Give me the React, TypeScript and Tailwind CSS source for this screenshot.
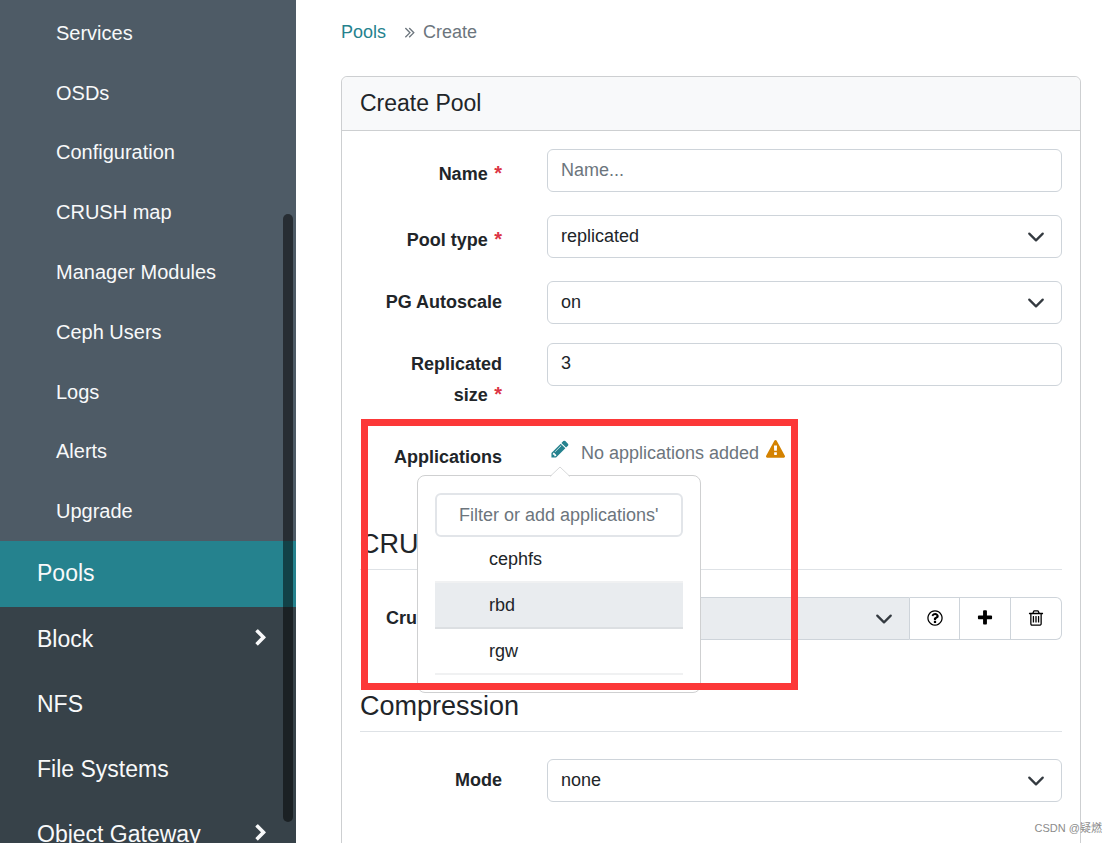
import type { ReactNode } from 'react';

const icons = {
  pencil:
    'M491 1536l91-91-235-235-91 91v107h128v128h107zm523-928q0-22-22-22-10 0-17 7l-542 542q-7 7-7 17 0 22 22 22 10 0 17-7l542-542q7-7 7-17zm-54-192l416 416-832 832h-416v-416zm683 96q0 53-37 90l-166 166-416-416 166-165q36-38 90-38 53 0 91 38l235 234q37 39 37 91z',
  warning:
    'M1024 1375v-190q0-14-9.500-23.500t-22.500-9.500h-192q-13 0-22.500 9.500t-9.500 23.500v190q0 14 9.500 23.500t22.500 9.500h192q13 0 22.500-9.500t9.500-23.500zm-2-374l18-459q0-12-10-19-13-11-24-11h-220q-11 0-24 11-10 7-10 21l17 457q0 10 10 16.500t24 6.500h185q14 0 23.500-6.500t10.500-16.500zm-14-934l768 1408q35 63-2 126-17 29-46.500 46t-63.500 17h-1536q-34 0-63.500-17t-46.500-46q-37-63-2-126l768-1408q17-31 47-49t65-18 65 18 47 49z',
  plus: 'M1600 736v192q0 40-28 68t-68 28h-416v416q0 40-28 68t-68 28h-192q-40 0-68-28t-28-68v-416h-416q-40 0-68-28t-28-68v-192q0-40 28-68t68-28h416v-416q0-40 28-68t68-28h192q40 0 68 28t28 68v416h416q40 0 68 28t28 68z',
  trash:
    'M704 736v576q0 14-9 23t-23 9h-64q-14 0-23-9t-9-23v-576q0-14 9-23t23-9h64q14 0 23 9t9 23zm256 0v576q0 14-9 23t-23 9h-64q-14 0-23-9t-9-23v-576q0-14 9-23t23-9h64q14 0 23 9t9 23zm256 0v576q0 14-9 23t-23 9h-64q-14 0-23-9t-9-23v-576q0-14 9-23t23-9h64q14 0 23 9t9 23zm128 724v-948h-896v948q0 22 7 40.500t14.500 27 10.500 8.500h832q3 0 10.500-8.500t14.500-27 7-40.500zm-672-1076h448l-48-117q-7-9-17-11h-317q-10 2-17 11zm928 32v64q0 14-9 23t-23 9h-96v948q0 83-47 143.500t-113 60.500h-832q-66 0-113-58.500t-47-141.500v-952h-96q-14 0-23-9t-9-23v-64q0-14 9-23t23-9h309l70-167q15-37 54-63t79-26h320q40 0 79 26t54 63l70 167h309q14 0 23 9t9 23z',
  question:
    'M1008 1200v160q0 14-9 23t-23 9h-160q-14 0-23-9t-9-23v-160q0-14 9-23t23-9h160q14 0 23 9t9 23zm256-496q0 50-15 90t-45.500 69-52 44-59.500 36q-32 18-46.500 28t-26 24-11.500 29v32q0 14-9 23t-23 9h-160q-14 0-23-9t-9-23v-68q0-35 10.500-64.500t24-47.500 39-35.500 41-25.500 44.500-21q53-25 75-43t22-49q0-42-43.500-71.500t-95.500-29.500q-56 0-95 27-29 20-80 83-9 12-25 12-11 0-19-6l-108-82q-10-7-12-20t5-23q122-192 349-192 129 0 238.500 89.500t109.500 214.500zm-368-448q-130 0-248.500 51t-204 136.500-136.500 204-51 248.500 51 248.500 136.500 204 204 136.500 248.500 51 248.500-51 204-136.500 136.500-204 51-248.500-51-248.500-136.500-204-204-136.500-248.500-51zm768 640q0 209-103 385.500t-279.500 279.500-385.500 103-385.500-103-279.500-279.500-103-385.500 103-385.500 279.500-279.500 385.500-103 385.500 103 279.500 279.500 103 385.500z',
  chevronRight:
    'M1363 877l-742 742q-19 19-45 19t-45-19l-166-166q-19-19-19-45t19-45l531-531-531-531q-19-19-19-45t19-45l166-166q19-19 45-19t45 19l742 742q19 19 19 45t-19 45z',
  angleDoubleRight:
    'M979 960q0 13-10 23l-466 466q-10 10-23 10t-23-10l-50-50q-10-10-10-23t10-23l393-393-393-393q-10-10-10-23t10-23l50-50q10-10 23-10t23 10l466 466q10 10 10 23zm384 0q0 13-10 23l-466 466q-10 10-23 10t-23-10l-50-50q-10-10-10-23t10-23l393-393-393-393q-10-10-10-23t10-23l50-50q10-10 23-10t23 10l466 466q10 10 10 23z',
};

function Icon({ name, className }: { name: keyof typeof icons; className: string }) {
  return (
    <svg viewBox="0 0 1792 1792" fill="currentColor" aria-hidden="true" className={className}>
      <path d={icons[name]} />
    </svg>
  );
}

const clusterItems = [
  'Services',
  'OSDs',
  'Configuration',
  'CRUSH map',
  'Manager Modules',
  'Ceph Users',
  'Logs',
  'Alerts',
  'Upgrade',
];

const sections = [
  { label: 'Block', expandable: true },
  { label: 'NFS', expandable: false },
  { label: 'File Systems', expandable: false },
  { label: 'Object Gateway', expandable: true },
];

function Sidebar() {
  return (
    <nav className="relative flex w-[296px] shrink-0 flex-col overflow-hidden bg-[#374249] text-[#f8f9fa]">
      <ul className="flex min-h-[541px] shrink-0 flex-col bg-[#4e5b66] pt-[3px] text-xl">
        {clusterItems.map((item) => (
          <li key={item} className="flex flex-1">
            <a href="#" className="flex flex-1 items-center pl-14">
              {item}
            </a>
          </li>
        ))}
      </ul>
      <ul className="shrink-0 text-[23px]">
        <li>
          <a href="#" aria-current="page" className="flex h-[66px] items-center bg-[#25828e] pl-[37px]">
            Pools
          </a>
        </li>
        {sections.map((section) => (
          <li key={section.label}>
            <a href="#" className="flex h-[65px] items-center justify-between pr-[26px] pl-[37px]">
              {section.label}
              {section.expandable && <Icon name="chevronRight" className="mb-1 size-[18px]" />}
            </a>
          </li>
        ))}
      </ul>
      <div className="absolute top-[214px] right-[3px] h-[608px] w-[10px] rounded-full bg-black/50" />
    </nav>
  );
}

type RowProps = {
  id: string;
  label: string;
  required?: boolean;
  lowered?: boolean;
  className?: string;
  children: ReactNode;
};

function Row({ id, label, required, lowered, className = '', children }: RowProps) {
  return (
    <div className={`grid grid-cols-[142fr_515fr] gap-[45px] ${className}`}>
      <label
        htmlFor={id}
        className={`pl-4 text-right leading-[31px] font-bold ${lowered ? 'pt-[10px]' : 'pt-[6px]'}`}
      >
        {label}
        {required && <span className="ml-px text-xl leading-none text-[#dc3545]">{'\u00a0*'}</span>}
      </label>
      {children}
    </div>
  );
}

const field = 'h-[43px] w-full border border-[#ced4da] px-[13px] text-[#212529]';

function Select({ id, value, disabled }: { id: string; value: string; disabled?: boolean }) {
  return (
    <div className="relative min-w-0 flex-1">
      <select
        id={id}
        disabled={disabled}
        className={`${field} appearance-none pb-[2px] ${disabled ? 'rounded-l-md bg-[#e9ecef]' : 'rounded-md bg-white'}`}
      >
        <option>{value}</option>
      </select>
      <svg
        viewBox="0 0 16 16"
        fill="none"
        stroke="#343a40"
        strokeWidth="2"
        strokeLinecap="round"
        strokeLinejoin="round"
        aria-hidden="true"
        className="pointer-events-none absolute top-[13px] right-[17px] size-[18px]"
      >
        <path d="m2 5 6 6 6-6" />
      </svg>
    </div>
  );
}

function ApplicationsPopover() {
  return (
    <div className="absolute top-[39px] -left-[130px] z-10 w-[284px] rounded-lg border border-[#cfd0d1] bg-white p-[17px] text-[#212529]">
      <svg viewBox="0 0 20 11" aria-hidden="true" className="absolute -top-[10px] left-[132px] h-[11px] w-5">
        <path d="M0 11 10 1l10 10z" fill="#fff" />
        <path d="M0 10.500 10 1l10 9.500" fill="none" stroke="#d8d9da" />
      </svg>
      <input
        aria-label="Filter or add applications"
        placeholder="Filter or add applications'"
        className="h-11 w-full rounded-md border-2 border-[#e2e5e9] px-[22px] placeholder:text-[#6c757d]"
      />
      <ul>
        {['cephfs', 'rbd', 'rgw'].map((app) => (
          <li key={app}>
            <button
              type="button"
              className={`h-[46px] w-full border-b-2 pl-[54px] text-left ${
                app === 'rbd' ? 'border-[#dcdfe2] bg-[#e9ecef]' : 'border-[#f0f1f2]'
              }`}
            >
              {app}
            </button>
          </li>
        ))}
      </ul>
    </div>
  );
}

function SectionTitle({ className, children }: { className: string; children: ReactNode }) {
  return (
    <h2 className={`mb-[27px] border-b border-[#dee2e6] pb-2 text-[27px] leading-[34px] ${className}`}>
      {children}
    </h2>
  );
}

const iconButton =
  'flex h-[43px] items-center justify-center border border-l-0 border-[#ced4da] pb-[2px] text-black';

export default function App() {
  return (
    <div className="relative flex h-screen overflow-hidden bg-white font-['Liberation_Sans',Arial,sans-serif] text-lg text-[#212529]">
      <Sidebar />
      <main className="min-w-0 flex-1 pt-[18px] pr-9 pl-[45px]">
        <nav aria-label="Breadcrumb" className="flex items-center leading-7 text-[#6c757d]">
          <a href="#" className="text-[#25828e]">
            Pools
          </a>
          <Icon name="angleDoubleRight" className="mr-1 ml-[15px] size-[18px]" />
          <span>Create</span>
        </nav>

        <form className="relative mt-[30px] rounded-md border border-[#cdcfd1]">
          <h1 className="rounded-t-md border-b border-[#cdcfd1] bg-[#f8f9fa] px-[18px] py-[10px] text-[23px] leading-[33px]">
            Create Pool
          </h1>
          <div className="px-[18px] pt-[18px] pb-24">
            <Row id="name" label="Name" required lowered className="mb-[23px]">
              <input id="name" placeholder="Name..." className={`${field} rounded-md placeholder:text-[#6c757d]`} />
            </Row>
            <Row id="type" label="Pool type" required lowered className="mb-[23px]">
              <Select id="type" value="replicated" />
            </Row>
            <Row id="autoscale" label="PG Autoscale" className="mb-[19px]">
              <Select id="autoscale" value="on" />
            </Row>
            <Row id="size" label="Replicated size" required className="mb-[25px]">
              <input id="size" defaultValue="3" className={`${field} rounded-md pb-[2px]`} />
            </Row>
            <Row id="applications" label="Applications">
              <div className="relative flex pt-[4px] leading-[27px] text-[#6c757d]">
                <button
                  id="applications"
                  type="button"
                  aria-label="Edit applications"
                  className="-mt-px mr-[11px] ml-[3px] h-5 text-[#25828e]"
                >
                  <Icon name="pencil" className="size-5" />
                </button>
                <span>No applications added</span>
                <Icon name="warning" className="ml-[7px] size-[19px] text-[#d48200]" />
                <ApplicationsPopover />
              </div>
            </Row>

            <SectionTitle className="mt-[54px]">CRUSH</SectionTitle>
            <Row id="ruleset" label="Crush ruleset">
              <div className="flex">
                <Select id="ruleset" value="" disabled />
                <button type="button" aria-label="Help" className={`${iconButton} w-[50px]`}>
                  <Icon name="question" className="size-[18px]" />
                </button>
                <button type="button" aria-label="Add rule" className={`${iconButton} w-[51px]`}>
                  <Icon name="plus" className="size-[18px]" />
                </button>
                <button type="button" aria-label="Delete rule" className={`${iconButton} w-[51px] rounded-r-md`}>
                  <Icon name="trash" className="size-[18px]" />
                </button>
              </div>
            </Row>

            <SectionTitle className="mt-[49px]">Compression</SectionTitle>
            <Row id="mode" label="Mode">
              <Select id="mode" value="none" />
            </Row>
          </div>
          <div className="pointer-events-none absolute top-[342px] left-[19px] z-20 h-[271px] w-[437px] border-[7px] border-[#fc3838]" />
        </form>
      </main>
      <p className="absolute right-[15px] bottom-[7px] font-['Liberation_Sans','Noto_Sans_CJK_SC',sans-serif] text-[11px] leading-4 text-[#8c8c8c]">
        CSDN @疑燃
      </p>
    </div>
  );
}
